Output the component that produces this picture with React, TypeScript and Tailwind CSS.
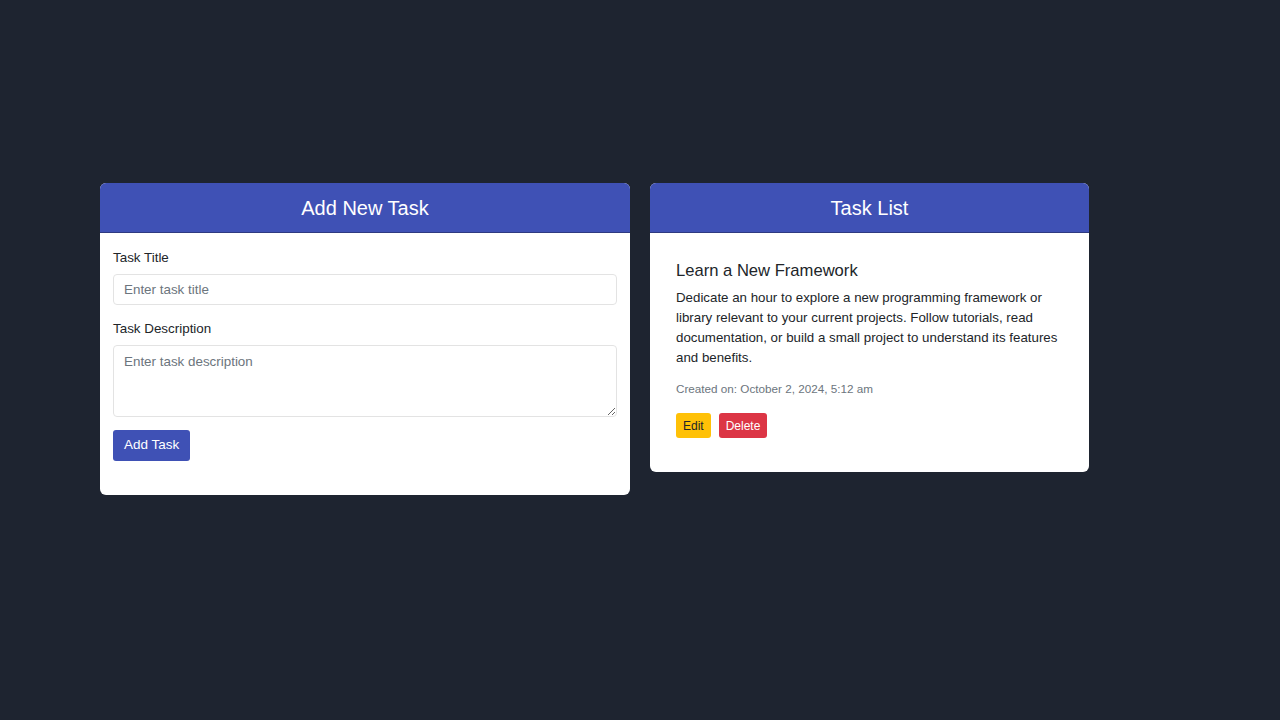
import React, { useState } from 'react';

interface Task {
  title: string;
  description: string;
  createdAt: string;
}

const INITIAL_TASKS: Task[] = [
  {
    title: 'Learn a New Framework',
    description:
      'Dedicate an hour to explore a new programming framework or library relevant to your current projects. Follow tutorials, read documentation, or build a small project to understand its features and benefits.',
    createdAt: 'October 2, 2024, 5:12 am',
  },
];

const App: React.FC = () => {
  const [tasks] = useState<Task[]>(INITIAL_TASKS);
  const [title, setTitle] = useState('');
  const [description, setDescription] = useState('');

  return (
    <div
      className="min-h-screen w-full bg-[#1e2430] pt-[183px] pl-[100px]"
      style={{ fontFamily: '"Liberation Sans", Arial, sans-serif' }}
    >
      <div className="flex items-start gap-5">
        {/* Add task form */}
        <div className="w-[530px] bg-white rounded-md overflow-hidden">
          <div className="h-[50px] bg-[#3f51b5] border-b border-[#2e3a80] flex items-center justify-center">
            <h2 className="text-[20px] text-white">Add New Task</h2>
          </div>
          <form className="px-[13px] pt-[14px] pb-[34px]" onSubmit={e => e.preventDefault()}>
            <label className="block text-[13.4px] leading-[21px] text-[#212529] mb-[6px]">Task Title</label>
            <input
              value={title}
              onChange={e => setTitle(e.target.value)}
              placeholder="Enter task title"
              className="w-full h-[31px] border border-[#e3e3e3] rounded-[4px] px-[10px] text-[13.4px] text-[#333] placeholder:text-[#6c757d] outline-none"
            />
            <label className="block text-[13.4px] leading-[21px] text-[#212529] mt-[13px] mb-[6px]">Task Description</label>
            <textarea
              value={description}
              onChange={e => setDescription(e.target.value)}
              placeholder="Enter task description"
              className="block w-full h-[72px] border border-[#e3e3e3] rounded-[4px] px-[10px] py-[6px] text-[13.4px] leading-[19px] text-[#333] placeholder:text-[#6c757d] outline-none"
            />
            <button
              type="submit"
              className="mt-[13px] h-[31px] px-[11px] bg-[#3f51b5] text-white text-[13.5px] rounded-[3px]"
            >
              Add Task
            </button>
          </form>
        </div>

        {/* Task list */}
        <div className="w-[439px] bg-white rounded-md overflow-hidden">
          <div className="h-[50px] bg-[#3f51b5] border-b border-[#2e3a80] flex items-center justify-center">
            <h2 className="text-[20px] text-white">Task List</h2>
          </div>
          <div className="px-[26px] pt-[26px] pb-[34px]">
            {tasks.map((task, i) => (
              <div key={i}>
                <h3 className="text-[16.6px] leading-[24px] text-[#212529]">{task.title}</h3>
                <p className="mt-[5px] text-[13.3px] leading-[20px] text-[#212529]">{task.description}</p>
                <p className="mt-[13px] text-[11.7px] leading-[16px] text-[#6c757d]">Created on: {task.createdAt}</p>
                <div className="mt-[16px] flex gap-2">
                  <button className="h-[25px] px-[7px] bg-[#ffc107] text-[#212529] text-[12px] rounded-[3px]">Edit</button>
                  <button className="h-[25px] px-[7px] bg-[#dc3545] text-white text-[12px] rounded-[3px]">Delete</button>
                </div>
              </div>
            ))}
          </div>
        </div>
      </div>
    </div>
  );
};

export default App;
